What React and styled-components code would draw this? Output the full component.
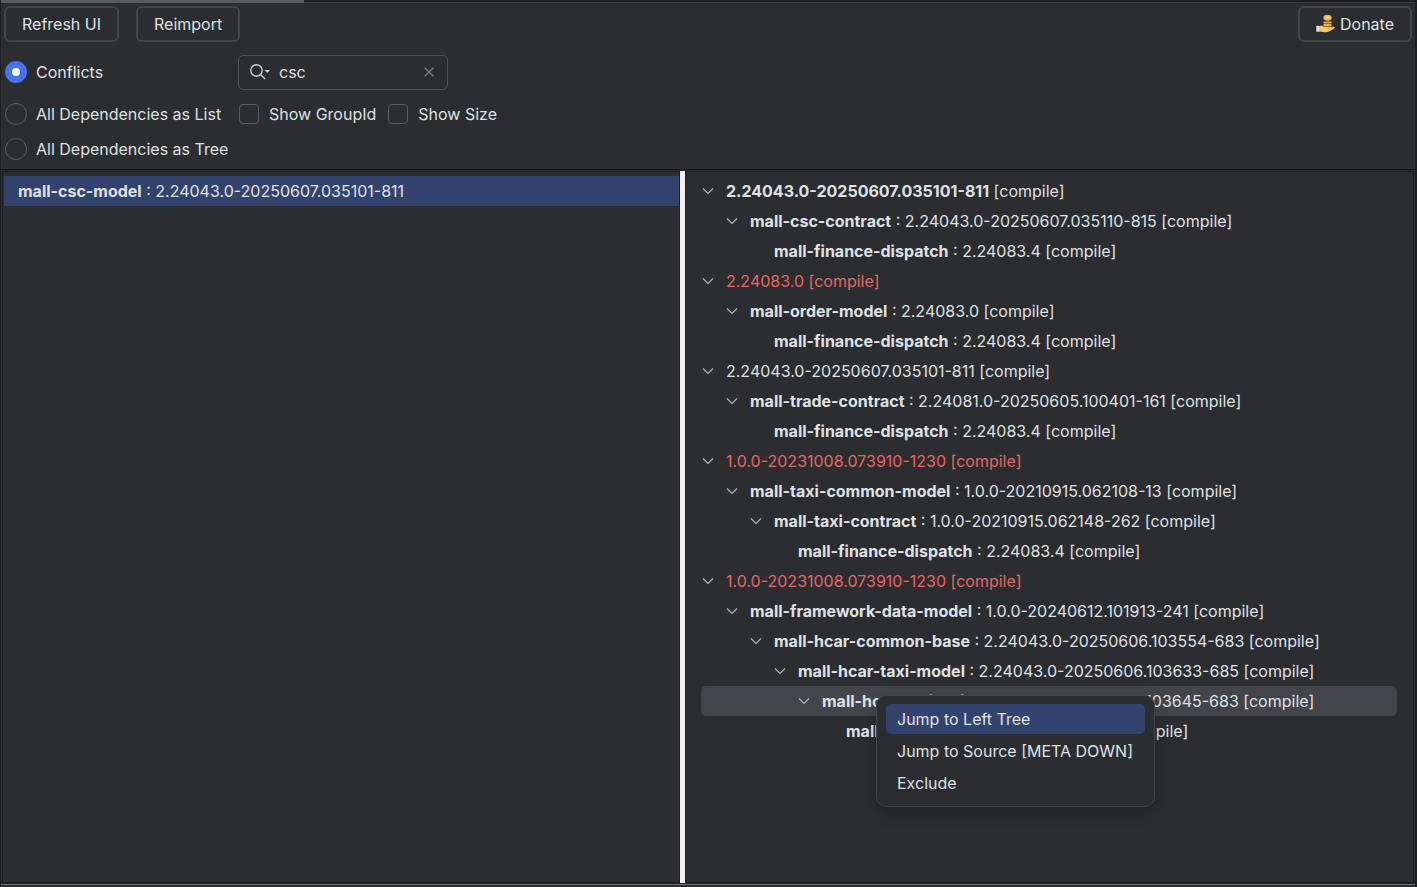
import React from 'react';
import styled, { createGlobalStyle } from 'styled-components';

const GlobalStyle = createGlobalStyle`
  * { box-sizing: border-box; }
  body {
    margin: 0;
    background: #2b2d30;
    color: #dfe1e5;
    font: 16px/30px Inter, "Liberation Sans", sans-serif;
  }
  button, input { font: inherit; color: inherit; }
`;

const Window = styled.div`
  display: flex;
  flex-direction: column;
  min-height: 100vh;
  border-left: 1px solid #1e1f22;
  border-right: 2px solid #1e1f22;
`;

const TopScroll = styled.div`
  height: 3px;
  background: #1e1f22;
  border-bottom: 1px solid #393b40;
`;

const Thumb = styled.div`
  width: 303px;
  height: 3px;
  background: #5a5b5e;
`;

const Toolbar = styled.div`
  display: flex;
  gap: 17px;
  padding: 3px 3px 0;
`;

const Button = styled.button`
  display: flex;
  align-items: center;
  gap: 4px;
  height: 36px;
  padding: 0 16px;
  border: 2px solid #43454a;
  border-radius: 6px;
  background: transparent;
  margin-left: ${(p) => (p.$end ? 'auto' : 0)};
`;

const Filters = styled.form`
  display: grid;
  grid-template-columns: 233px 1fr;
  grid-template-rows: 42px 42px 28px;
  align-items: center;
  padding: 9px 4px 6px;
`;

const Option = styled.label`
  display: flex;
  align-items: center;
  gap: 9px;
`;

const Radio = styled.input.attrs({ type: 'radio', name: 'view' })`
  appearance: none;
  width: 22px;
  height: 22px;
  margin: 0;
  border: 1px solid #5a5d63;
  border-radius: 50%;
  &:checked {
    border: 7px solid #4774ea;
    background: #fff;
  }
`;

const CheckBox = styled.input.attrs({ type: 'checkbox' })`
  appearance: none;
  width: 20px;
  height: 20px;
  margin: 0 1px 0 0;
  border: 1px solid #5a5d63;
  border-radius: 4px;
`;

const Checks = styled.div`
  display: flex;
  gap: 12px;
  padding-left: 1px;
`;

const Search = styled.div`
  display: flex;
  align-items: center;
  width: 210px;
  height: 35px;
  padding: 0 12px 0 11px;
  border: 1px solid #4e5157;
  border-radius: 5px;
`;

const SearchInput = styled.input`
  flex: 1;
  min-width: 0;
  padding: 0 0 0 8px;
  border: 0;
  outline: 0;
  background: transparent;
`;

const Clear = styled.button`
  display: flex;
  padding: 0;
  border: 0;
  background: transparent;
`;

const Panes = styled.main`
  flex: 1;
  display: grid;
  grid-template-columns: minmax(0, 678fr) 5px minmax(0, 729fr);
  border-top: 1px solid #18191b;
  padding: 1px 1px 0;
`;

const Pane = styled.section`
  padding: ${(p) => (p.$tree ? '4px 16px 4px 15px' : '4px 0 4px 1px')};
  border: 1px solid #1e1f22;
`;

const Divider = styled.div`
  background: #f2f0ee;
`;

const Footer = styled.div`
  height: 4px;
  border-top: 1px solid #1e1f22;
  background: linear-gradient(#77787b 0 1px, #2b2d30 1px);
`;

const ListRow = styled.div`
  height: 30px;
  padding-left: 14px;
  background: #33436d;
  white-space: pre;
`;

const List = styled.ul`
  margin: 0;
  padding: 0;
  list-style: none;
`;

const TreeRow = styled.li`
  position: relative;
  display: flex;
  align-items: center;
  height: 30px;
  padding-left: ${(p) => p.$depth * 24}px;
  border-radius: 5px;
  white-space: pre;
  color: ${(p) => (p.$conflict ? '#e56666' : 'inherit')};
  background: ${(p) => (p.$hover ? '#43454a' : 'transparent')};
`;

const Arrow = styled.span`
  display: flex;
  width: 25px;
  padding-left: 1px;
`;

const Menu = styled.div`
  position: absolute;
  z-index: 1;
  top: 9px;
  left: 175px;
  display: flex;
  flex-direction: column;
  gap: 2px;
  width: 279px;
  padding: 8px 9px;
  border: 1px solid #43454a;
  border-radius: 10px;
  background: #2b2d30;
  box-shadow: 0 6px 14px rgba(0, 0, 0, 0.25);
`;

const MenuItem = styled.button`
  height: 30px;
  padding: 0 11px;
  border: 0;
  border-radius: 5px;
  text-align: left;
  background: ${(p) => (p.$active ? '#33436d' : 'transparent')};
`;

const rows = [
  { d: 0, b: '2.24043.0-20250607.035101-811', t: ' [compile]' },
  { d: 1, b: 'mall-csc-contract', t: ' : 2.24043.0-20250607.035110-815 [compile]' },
  { d: 2, leaf: true },
  { d: 0, t: '2.24083.0 [compile]', conflict: true },
  { d: 1, b: 'mall-order-model', t: ' : 2.24083.0 [compile]' },
  { d: 2, leaf: true },
  { d: 0, t: '2.24043.0-20250607.035101-811 [compile]' },
  { d: 1, b: 'mall-trade-contract', t: ' : 2.24081.0-20250605.100401-161 [compile]' },
  { d: 2, leaf: true },
  { d: 0, t: '1.0.0-20231008.073910-1230 [compile]', conflict: true },
  { d: 1, b: 'mall-taxi-common-model', t: ' : 1.0.0-20210915.062108-13 [compile]' },
  { d: 2, b: 'mall-taxi-contract', t: ' : 1.0.0-20210915.062148-262 [compile]' },
  { d: 3, leaf: true },
  { d: 0, t: '1.0.0-20231008.073910-1230 [compile]', conflict: true },
  { d: 1, b: 'mall-framework-data-model', t: ' : 1.0.0-20240612.101913-241 [compile]' },
  { d: 2, b: 'mall-hcar-common-base', t: ' : 2.24043.0-20250606.103554-683 [compile]' },
  { d: 3, b: 'mall-hcar-taxi-model', t: ' : 2.24043.0-20250606.103633-685 [compile]' },
  { d: 4, b: 'mall-hcar-taxi-api', t: ' : 2.24043.0-20250606.103645-683 [compile]', hover: true },
  { d: 5, leaf: true },
];

const Chevron = () => (
  <svg width="12" height="12" viewBox="0 0 12 12" fill="none" stroke="#b4b8bf" strokeWidth="1.2">
    <path d="M1 3.5 6 8.5l5-5" />
  </svg>
);

const SearchIcon = () => (
  <svg width="21" height="16" viewBox="0 0 21 16" fill="none" stroke="#ced0d6" strokeWidth="1.4">
    <circle cx="6.5" cy="6.5" r="5.7" />
    <path d="m10.7 10.7 4.3 4.3" />
    <path d="M14.5 6h5.500l-2.750 3z" fill="#ced0d6" stroke="none" />
  </svg>
);

const DonateIcon = () => (
  <svg width="20" height="20" viewBox="0 0 20 20">
    <ellipse cx="11.5" cy="3.8" rx="4.2" ry="3" fill="#e9b45c" />
    <ellipse cx="11.5" cy="3.6" rx="2.2" ry="1.3" fill="#f8d993" />
    <path d="M7.5 7.6h8v1.9h-8zM7.5 10.1h8v1.9h-8zM8 12.6h7.5v1.6H8z" fill="#eda94a" />
    <path d="M3.5 12.3c2-1 3.5-.4 5 1h3c1 0 1 1.3 0 1.5l5.5-2c1.5-.4 2.5.6 1.3 1.6l-5.3 3.2c-2 .9-6 .6-9.5-.1z" fill="#f5c767" />
    <path d="M.3 11.8h3.4v5.9H.3z" fill="#e8e6e1" />
  </svg>
);

export default function App() {
  return (
    <Window>
      <GlobalStyle />
      <TopScroll><Thumb /></TopScroll>
      <Toolbar>
        <Button type="button">Refresh UI</Button>
        <Button type="button">Reimport</Button>
        <Button type="button" $end><DonateIcon />Donate</Button>
      </Toolbar>
      <Filters>
        <Option><Radio defaultChecked />Conflicts</Option>
        <Search>
          <SearchIcon />
          <SearchInput aria-label="Search" defaultValue="csc" />
          <Clear type="button" aria-label="Clear">
            <svg width="12" height="12" viewBox="0 0 12 12" stroke="#7c7f86" strokeWidth="1.2">
              <path d="m1.5 1.5 9 9m0-9-9 9" />
            </svg>
          </Clear>
        </Search>
        <Option><Radio />All Dependencies as List</Option>
        <Checks>
          <Option><CheckBox />Show GroupId</Option>
          <Option><CheckBox />Show Size</Option>
        </Checks>
        <Option><Radio />All Dependencies as Tree</Option>
      </Filters>
      <Panes>
        <Pane>
          <ListRow><b>mall-csc-model</b> : 2.24043.0-20250607.035101-811</ListRow>
        </Pane>
        <Divider />
        <Pane $tree>
          <List>
            {rows.map((r, i) => (
              <TreeRow key={i} $depth={r.d} $conflict={r.conflict} $hover={r.hover}>
                <Arrow>{!r.leaf && <Chevron />}</Arrow>
                <b>{r.leaf ? 'mall-finance-dispatch' : r.b}</b>
                <span>{r.leaf ? ' : 2.24083.4 [compile]' : r.t}</span>
                {r.hover && (
                  <Menu>
                    <MenuItem type="button" $active>Jump to Left Tree</MenuItem>
                    <MenuItem type="button">Jump to Source [META DOWN]</MenuItem>
                    <MenuItem type="button">Exclude</MenuItem>
                  </Menu>
                )}
              </TreeRow>
            ))}
          </List>
        </Pane>
      </Panes>
      <Footer />
    </Window>
  );
}
